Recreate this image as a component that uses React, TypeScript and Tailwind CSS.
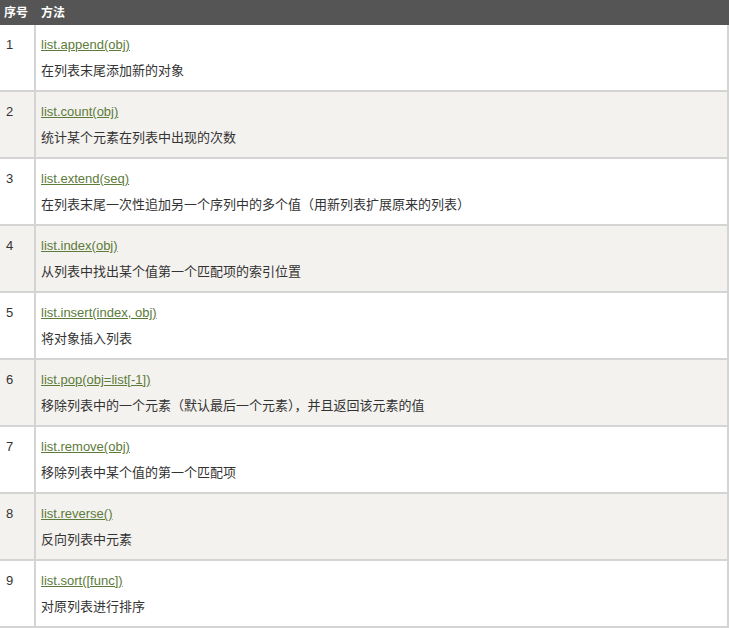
const rows: [string, string][] = [
  ["list.append(obj)", "在列表末尾添加新的对象"],
  ["list.count(obj)", "统计某个元素在列表中出现的次数"],
  ["list.extend(seq)", "在列表末尾一次性追加另一个序列中的多个值（用新列表扩展原来的列表）"],
  ["list.index(obj)", "从列表中找出某个值第一个匹配项的索引位置"],
  ["list.insert(index, obj)", "将对象插入列表"],
  ["list.pop(obj=list[-1])", "移除列表中的一个元素（默认最后一个元素），并且返回该元素的值"],
  ["list.remove(obj)", "移除列表中某个值的第一个匹配项"],
  ["list.reverse()", "反向列表中元素"],
  ["list.sort([func])", "对原列表进行排序"],
];

export default function App() {
  return (
    <div className="w-[729px] text-[13px] text-[#333]" style={{ fontFamily: '"Liberation Sans", Arial, "Noto Sans CJK SC", sans-serif' }}>
      <div className="flex h-[25px] bg-[#555] text-white font-bold items-center text-[12px]">
        <div className="w-[36px] pl-[4px]">序号</div>
        <div className="pl-[5px]">方法</div>
      </div>
      <div className="border-r-[2px] border-[#d4d4d4]">
        {rows.map(([m, d], i) => (
          <div key={i} className={`flex h-[67px] border-b-[2px] border-[#d4d4d4] ${i % 2 ? "bg-[#f4f2ef]" : "bg-white"}`}>
            <div className="w-[36px] border-r-[2px] border-[#d4d4d4] pl-[6px] pt-[12px] leading-[16px]">{i + 1}</div>
            <div className="pl-[5px] pt-[12px] flex flex-col gap-[10px]">
              <a href="#" className="underline text-[#5d7b3a] leading-[16px]">{m}</a>
              <div className="leading-[16px]">{d}</div>
            </div>
          </div>
        ))}
      </div>
    </div>
  );
}
